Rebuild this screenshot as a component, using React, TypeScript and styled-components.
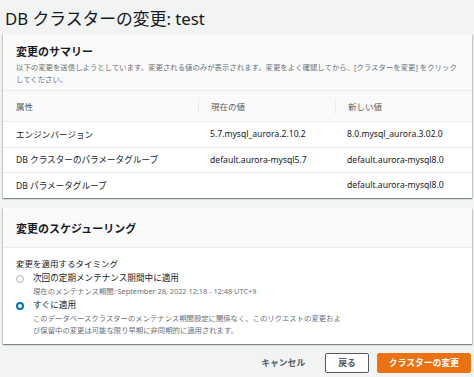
import React from 'react'
import styled, { createGlobalStyle } from 'styled-components'

const GlobalStyle = createGlobalStyle`
  html, body {
    margin: 0;
    padding: 0;
    background: #f2f3f3;
  }
  body {
    font-family: "Noto Sans", "Noto Sans CJK JP", sans-serif;
    color: #16191f;
  }
`

const Page = styled.div`
  width: 474px;
  height: 377px;
  overflow: hidden;
  padding: 6px 2px 0 3px;
  box-sizing: border-box;
`

const Title = styled.h1`
  margin: 0 0 0 2px;
  font-size: 16.8px;
  font-weight: 400;
  line-height: 26px;
  color: #16191f;
`

const Card = styled.div<{ $top?: number }>`
  margin-top: ${(p) => p.$top ?? 0}px;
  background: #ffffff;
  box-shadow: 0 1px 1px 0 rgba(0, 28, 36, 0.3), 1px 1px 1px 0 rgba(0, 28, 36, 0.15),
    -1px 1px 1px 0 rgba(0, 28, 36, 0.15);
`

const CardHeader = styled.div<{ $pad: string }>`
  background: #fafafa;
  border-bottom: 1px solid #eaeded;
  padding: ${(p) => p.$pad};
`

const CardTitle = styled.div`
  font-size: 11px;
  font-weight: 700;
  line-height: 16px;
`

const CardDesc = styled.div`
  font-size: 7.4px;
  line-height: 12px;
  color: #687078;
  margin-top: 1px;
`

const DescLine = styled.span`
  display: block;
  white-space: nowrap;
`

const Table = styled.div`
  display: grid;
  grid-template-columns: 195px 137px 1fr;
`

const HeadCell = styled.div<{ $sep?: boolean }>`
  background: #fafafa;
  height: 30px;
  display: flex;
  align-items: center;
  padding-left: 13px;
  font-size: 8.5px;
  color: #545b64;
  border-bottom: 1px solid #eaeded;
  position: relative;
  &::before {
    content: '';
    display: ${(p) => (p.$sep ? 'block' : 'none')};
    position: absolute;
    left: 0;
    top: 7px;
    bottom: 7px;
    width: 1px;
    background: #eaeded;
  }
`

const Cell = styled.div<{ $first?: boolean; $last?: boolean }>`
  height: 24.5px;
  display: flex;
  align-items: center;
  padding-left: ${(p) => (p.$first ? 13 : 12)}px;
  font-size: 8.6px;
  color: #16191f;
  border-bottom: ${(p) => (p.$last ? 'none' : '1px solid #eaeded')};
  white-space: nowrap;
`

const Body = styled.div`
  padding: 9px 13px 8px 13px;
`

const FieldLabel = styled.div`
  font-size: 8.5px;
  line-height: 14px;
  color: #16191f;
`

const Option = styled.div<{ $top?: number }>`
  display: flex;
  align-items: flex-start;
  gap: 9px;
  margin-top: ${(p) => p.$top ?? 0}px;
`

const Radio = styled.span<{ $checked?: boolean }>`
  flex: none;
  box-sizing: border-box;
  width: 8px;
  height: 8px;
  border-radius: 50%;
  border: ${(p) => (p.$checked ? '2.5px solid #0073bb' : '1px solid #aab7b8')};
  background: #fff;
  margin-top: 3px;
`

const OptionText = styled.div``

const OptionLabel = styled.div`
  font-size: 8.6px;
  line-height: 13px;
  color: #16191f;
`

const OptionDesc = styled.div`
  font-size: 7.35px;
  line-height: 12px;
  color: #687078;
`

const Footer = styled.div`
  display: flex;
  justify-content: flex-end;
  align-items: center;
  gap: 8px;
  margin-top: 9px;
  padding-right: 1px;
`

const LinkButton = styled.button`
  border: none;
  background: none;
  font-family: inherit;
  font-size: 8.8px;
  font-weight: 700;
  color: #545b64;
  padding: 0 10px;
  height: 20px;
  margin-right: 2px;
`

const Button = styled.button<{ $primary?: boolean }>`
  font-family: inherit;
  font-size: 8.8px;
  font-weight: 700;
  height: 20px;
  padding: 0 ${(p) => (p.$primary ? 11 : 12)}px;
  border: 1px solid ${(p) => (p.$primary ? '#ec7211' : '#545b64')};
  background: ${(p) => (p.$primary ? '#ec7211' : '#ffffff')};
  color: ${(p) => (p.$primary ? '#ffffff' : '#545b64')};
  border-radius: 2px;
`

const rows = [
  ['エンジンバージョン', '5.7.mysql_aurora.2.10.2', '8.0.mysql_aurora.3.02.0'],
  ['DB クラスターのパラメータグループ', 'default.aurora-mysql5.7', 'default.aurora-mysql8.0'],
  ['DB パラメータグループ', '', 'default.aurora-mysql8.0'],
]

export default function App() {
  return (
    <>
      <GlobalStyle />
      <Page>
        <Title>DB クラスターの変更: test</Title>
        <Card $top={2}>
          <CardHeader $pad="10px 13px 5px 13px">
            <CardTitle>変更のサマリー</CardTitle>
            <CardDesc>
              <DescLine>
                以下の変更を送信しようとしています。変更される値のみが表示されます。変更をよく確認してから、[クラスターを変更] をクリック
              </DescLine>
              <DescLine>してください。</DescLine>
            </CardDesc>
          </CardHeader>
          <Table>
            <HeadCell>属性</HeadCell>
            <HeadCell $sep>現在の値</HeadCell>
            <HeadCell $sep>新しい値</HeadCell>
            {rows.map((r, i) =>
              r.map((c, j) => (
                <Cell key={i + '-' + j} $first={j === 0} $last={i === rows.length - 1}>
                  {c}
                </Cell>
              ))
            )}
          </Table>
        </Card>

        <Card $top={10}>
          <CardHeader $pad="13px 13px 10px 13px">
            <CardTitle>変更のスケジューリング</CardTitle>
          </CardHeader>
          <Body>
            <FieldLabel>変更を適用するタイミング</FieldLabel>
            <Option $top={1}>
              <Radio />
              <OptionText>
                <OptionLabel>次回の定期メンテナンス期間中に適用</OptionLabel>
                <OptionDesc>現在のメンテナンス期間: September 28, 2022 12:18 - 12:48 UTC+9</OptionDesc>
              </OptionText>
            </Option>
            <Option $top={2}>
              <Radio $checked />
              <OptionText>
                <OptionLabel>すぐに適用</OptionLabel>
                <OptionDesc>
                  <DescLine>このデータベースクラスターのメンテナンス期間設定に関係なく、このリクエストの変更およ</DescLine>
                  <DescLine>び保留中の変更は可能な限り早期に非同期的に適用されます。</DescLine>
                </OptionDesc>
              </OptionText>
            </Option>
          </Body>
        </Card>

        <Footer>
          <LinkButton>キャンセル</LinkButton>
          <Button>戻る</Button>
          <Button $primary>クラスターの変更</Button>
        </Footer>
      </Page>
    </>
  )
}
